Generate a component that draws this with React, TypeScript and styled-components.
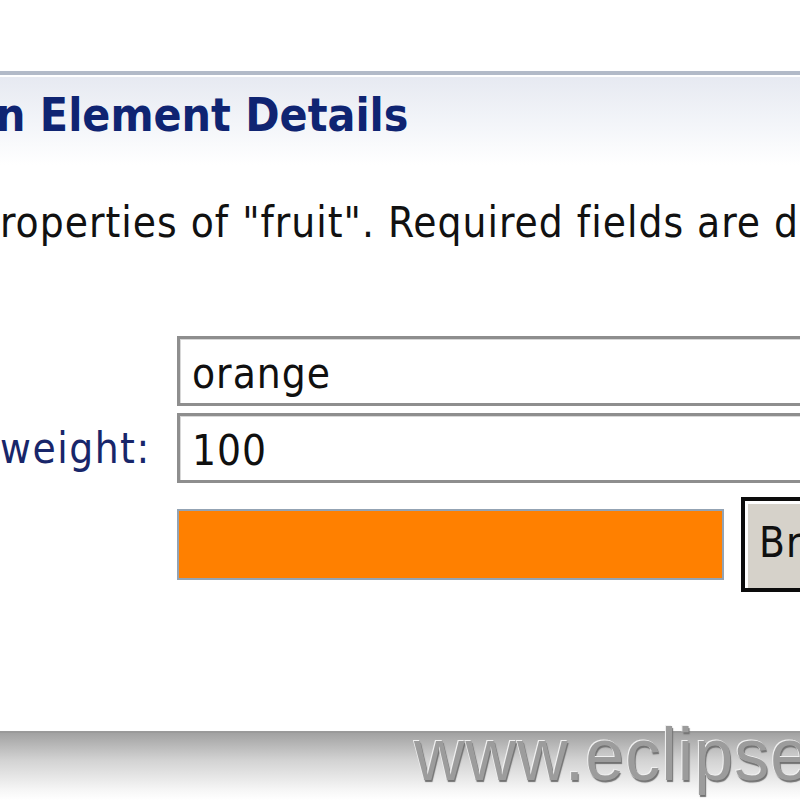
import * as React from 'react';
import styled, { createGlobalStyle } from 'styled-components';

const GlobalStyle = createGlobalStyle`
  html, body {
    margin: 0;
    padding: 0;
    background: #ffffff;
  }
`;

const uiFont = `"DejaVu Sans Condensed", "DejaVu Sans", Tahoma, sans-serif`;

const Page = styled.div`
  width: 800px;
  height: 800px;
  overflow: hidden;
  background: #ffffff;
  display: flex;
  flex-direction: column;
  font-family: ${uiFont};
  font-stretch: condensed;
`;

const TopSpace = styled.div`
  height: 71px;
  flex: none;
`;

const Header = styled.div`
  flex: none;
  height: 90px;
  border-top: 4px solid #b2bac8;
  box-shadow: inset 0 2px 0 #ffffff;
  background: linear-gradient(to bottom, #e6e9f1 0%, #f3f5f9 55%, #ffffff 100%);
  display: flex;
  align-items: center;
`;

const Title = styled.h1`
  margin: 0 0 10px -4px;
  font-size: 46px;
  font-weight: bold;
  color: #0f2472;
  white-space: nowrap;
`;

const Description = styled.p`
  margin: 33px 0 0 0;
  font-size: 42px;
  line-height: 50px;
  letter-spacing: 1px;
  color: #111111;
  white-space: nowrap;
`;

const Form = styled.div`
  margin-top: 88px;
  display: grid;
  grid-template-columns: 177px 700px;
  row-gap: 7px;
  align-items: center;
`;

const Label = styled.div`
  font-size: 42px;
  letter-spacing: 1.5px;
  color: #18266a;
  white-space: nowrap;
`;

const TextField = styled.div`
  box-sizing: border-box;
  height: 70px;
  border: 3px solid #8e8e8e;
  box-shadow: inset 1px 1px 0 #d8d8d8;
  background: #ffffff;
  display: flex;
  align-items: center;
  padding: 5px 0 0 12px;
  font-size: 42px;
  letter-spacing: 1px;
  color: #101010;
`;

const ColorRow = styled.div`
  display: flex;
  align-items: center;
  gap: 17px;
  margin-top: 7px;
`;

const Swatch = styled.div<{ $color: string }>`
  flex: none;
  box-sizing: border-box;
  width: 547px;
  height: 71px;
  background: ${(p) => p.$color};
  border: 2px solid #93a3b4;
`;

const BrowseButton = styled.div`
  flex: none;
  box-sizing: border-box;
  width: 140px;
  height: 95px;
  border: 4px solid #0c0c0c;
  box-shadow: inset 3px 3px 0 #ffffff;
  background: #d6d2ca;
  display: flex;
  align-items: center;
  padding: 0 0 4px 14px;
  font-size: 42px;
  letter-spacing: 1px;
  color: #101010;
`;

const Spacer = styled.div`
  flex: 1;
`;

const Footer = styled.div`
  position: relative;
  flex: none;
  height: 67px;
  border-top: 2px solid #9a9a9a;
  background: linear-gradient(to bottom, #a2a2a2 0%, #d2d2d2 40%, #f6f6f6 85%, #ffffff 100%);
`;

const Watermark = styled.div`
  position: absolute;
  left: 414px;
  top: -20px;
  font-family: "Liberation Sans", Arial, sans-serif;
  font-size: 70px;
  color: #9c9c9c;
  letter-spacing: 1px;
  transform: scaleY(1.05);
  transform-origin: top left;
  white-space: nowrap;
  text-shadow: -1px -1px 0 #f0f0f0, 1px 2px 1px #727272;
`;

export default function App() {
  return (
    <Page>
      <GlobalStyle />
      <TopSpace />
      <Header>
        <Title>n Element Details</Title>
      </Header>
      <Description>roperties of "fruit". Required fields are d</Description>
      <Form>
        <div />
        <TextField>orange</TextField>
        <Label>weight:</Label>
        <TextField>100</TextField>
        <div />
        <ColorRow>
          <Swatch $color="#ff8000" />
          <BrowseButton>Br</BrowseButton>
        </ColorRow>
      </Form>
      <Spacer />
      <Footer>
        <Watermark>www.eclipse</Watermark>
      </Footer>
    </Page>
  );
}
